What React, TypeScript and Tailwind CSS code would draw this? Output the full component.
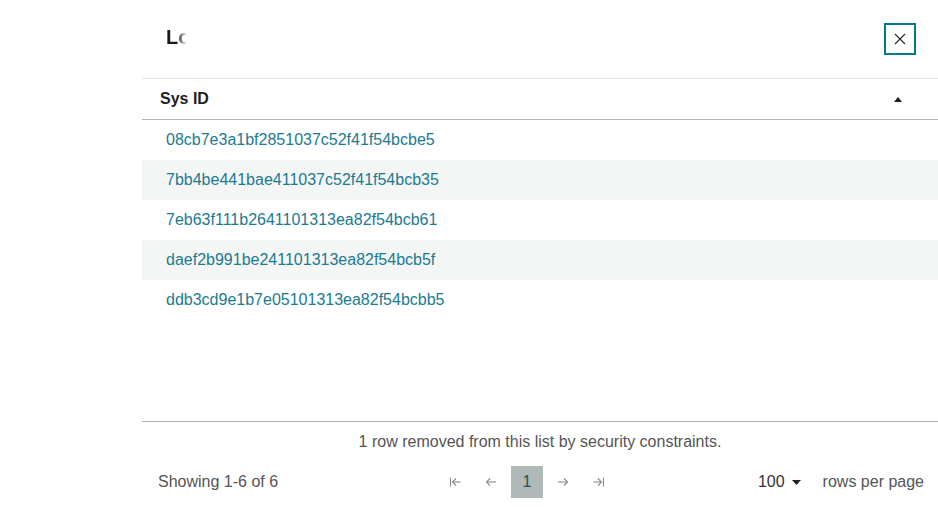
import React from "react";

const ids = [
  "08cb7e3a1bf2851037c52f41f54bcbe5",
  "7bb4be441bae411037c52f41f54bcb35",
  "7eb63f111b2641101313ea82f54bcb61",
  "daef2b991be241101313ea82f54bcb5f",
  "ddb3cd9e1b7e05101313ea82f54bcbb5",
];

function FirstIcon() {
  return (
    <svg width="14" height="14" viewBox="0 0 14 14" fill="none" stroke="#8a8a8a" strokeWidth="1.1">
      <path d="M2.5 2.5v9" />
      <path d="M12.5 7H4.5" />
      <path d="M8 3.5 4.5 7 8 10.5" />
    </svg>
  );
}

function PrevIcon() {
  return (
    <svg width="14" height="14" viewBox="0 0 14 14" fill="none" stroke="#8a8a8a" strokeWidth="1.1">
      <path d="M12 7H2.5" />
      <path d="M6 3.5 2.5 7 6 10.5" />
    </svg>
  );
}

function NextIcon() {
  return (
    <svg width="14" height="14" viewBox="0 0 14 14" fill="none" stroke="#8a8a8a" strokeWidth="1.1">
      <path d="M2 7h9.5" />
      <path d="M8 3.5 11.5 7 8 10.5" />
    </svg>
  );
}

function LastIcon() {
  return (
    <svg width="14" height="14" viewBox="0 0 14 14" fill="none" stroke="#8a8a8a" strokeWidth="1.1">
      <path d="M11.5 2.5v9" />
      <path d="M1.5 7h8" />
      <path d="M6 3.5 9.5 7 6 10.5" />
    </svg>
  );
}

export default function App() {
  return (
    <div className="w-[938px] h-[526px] bg-white overflow-hidden" style={{ fontFamily: '"Liberation Sans", Arial, sans-serif' }}>
      <div className="ml-[142px] h-full flex flex-col bg-white">
        {/* dialog header */}
        <div className="h-[79px] border-b border-[#e4e4e4] flex items-center pl-[24px] pr-[22px]">
          <div className="mb-[5px] w-[22px] overflow-hidden whitespace-nowrap text-[20px] font-bold text-[#1a1a1a] [mask-image:linear-gradient(to_right,black_50%,transparent_95%)]">
            Lookup
          </div>
          <button className="ml-auto w-[32px] h-[32px] border-2 border-[#00788d] flex items-center justify-center bg-white">
            <svg width="12" height="12" viewBox="0 0 12 12" stroke="#2b2b2b" strokeWidth="1.2">
              <path d="M1 1l10 10M11 1 1 11" />
            </svg>
          </button>
        </div>

        {/* column header */}
        <div className="h-[41px] border-b border-[#b5b5b5] flex items-center pl-[18px] pr-[36px]">
          <span className="text-[16px] font-bold text-[#1f1f1f]">Sys ID</span>
          <svg className="ml-auto" width="8" height="5" viewBox="0 0 8 5">
            <path d="M0 5 4 0 8 5z" fill="#1f1f1f" />
          </svg>
        </div>

        {/* rows */}
        <div className="flex flex-col">
          {ids.map((id, i) => (
            <div key={id} className={`h-[40px] flex items-center pl-[24px] ${i % 2 === 1 ? "bg-[#f4f6f6]" : "bg-white"}`}>
              <a className="text-[16px] text-[#1b7b91] cursor-pointer">{id}</a>
            </div>
          ))}
        </div>

        <div className="flex-1" />

        {/* footer */}
        <div className="border-t border-[#b0b0b0] h-[105px] flex flex-col">
          <div className="h-[39px] flex items-center justify-center text-[16px] text-[#555]">
            1 row removed from this list by security constraints.
          </div>
          <div className="h-[41px] pt-[1px] flex items-center pl-[16px] pr-[14px] text-[16px] text-[#555]">
            <div className="w-[281px]">Showing 1-6 of 6</div>
            <div className="flex items-center gap-[4px]">
              <button className="w-[32px] h-[32px] flex items-center justify-center"><FirstIcon /></button>
              <button className="w-[32px] h-[32px] flex items-center justify-center"><PrevIcon /></button>
              <button className="w-[32px] h-[32px] flex items-center justify-center bg-[#b0b8b8] text-[16px] text-[#24544a]">1</button>
              <button className="w-[32px] h-[32px] flex items-center justify-center"><NextIcon /></button>
              <button className="w-[32px] h-[32px] flex items-center justify-center"><LastIcon /></button>
            </div>
            <div className="ml-auto flex items-center">
              <span className="text-[#333]">100</span>
              <svg className="ml-[7px]" width="9" height="5" viewBox="0 0 9 5">
                <path d="M0 0h9L4.5 5z" fill="#222" />
              </svg>
              <span className="ml-[22px]">rows per page</span>
            </div>
          </div>
        </div>
      </div>
    </div>
  );
}
